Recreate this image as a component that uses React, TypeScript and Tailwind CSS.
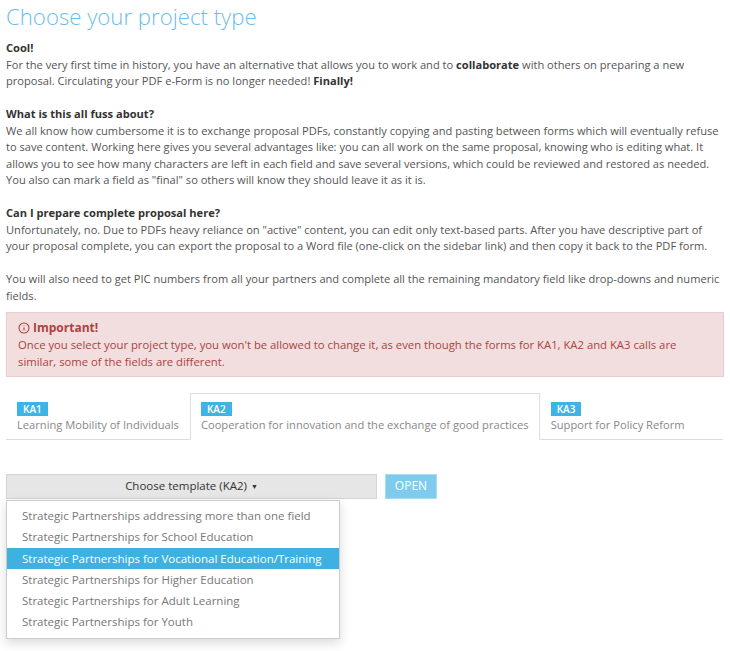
import { Info } from "lucide-react";

const templates = [
  "Strategic Partnerships addressing more than one field",
  "Strategic Partnerships for School Education",
  "Strategic Partnerships for Vocational Education/Training",
  "Strategic Partnerships for Higher Education",
  "Strategic Partnerships for Adult Learning",
  "Strategic Partnerships for Youth",
];

const tabs = [
  { code: "KA1", label: "Learning Mobility of Individuals" },
  { code: "KA2", label: "Cooperation for innovation and the exchange of good practices", active: true },
  { code: "KA3", label: "Support for Policy Reform" },
];

export default function App() {
  return (
    <div
      className="min-h-[651px] bg-white px-[6px] pt-[5px] text-[11.1px] leading-[16.5px] text-[#555]"
      style={{ fontFamily: '"Open Sans", "Liberation Sans", sans-serif' }}
    >
      <h1 className="text-[22.2px] font-light leading-[23px] text-[#6dbde8]">Choose your project type</h1>

      <div className="mt-[12px] w-[718px]">
        <p className="mb-[16.5px]">
          <strong className="text-[#333]">Cool!</strong>
          <br />
          For the very first time in history, you have an alternative that allows you to work and to{" "}
          <strong className="text-[#333]">collaborate</strong> with others on preparing a new proposal. Circulating your
          PDF e-Form is no longer needed! <strong className="text-[#333]">Finally!</strong>
        </p>
        <p className="mb-[16.5px]">
          <strong className="text-[#333]">What is this all fuss about?</strong>
          <br />
          We all know how cumbersome it is to exchange proposal PDFs, constantly copying and pasting between forms which
          will eventually refuse to save content. Working here gives you several advantages like: you can all work on the
          same proposal, knowing who is editing what. It allows you to see how many characters are left in each field and
          save several versions, which could be reviewed and restored as needed. You also can mark a field as "final" so
          others will know they should leave it as it is.
        </p>
        <p className="mb-[16.5px]">
          <strong className="text-[#333]">Can I prepare complete proposal here?</strong>
          <br />
          Unfortunately, no. Due to PDFs heavy reliance on "active" content, you can edit only text-based parts. After you
          have descriptive part of your proposal complete, you can export the proposal to a Word file (one-click on the
          sidebar link) and then copy it back to the PDF form.
        </p>
        <p>
          You will also need to get PIC numbers from all your partners and complete all the remaining mandatory field like
          drop-downs and numeric fields.
        </p>
      </div>

      <div className="mt-[8px] w-[718px] border border-[#ebccd1] bg-[#f2dede] px-[11px] pb-[6px] pt-[6px] text-[#a94442]">
        <div className="flex items-center gap-[3px] text-[12px] font-bold leading-[18px]">
          <Info size={12} strokeWidth={2.2} />
          <span>Important!</span>
        </div>
        <p className="text-[11.3px]">
          Once you select your project type, you won't be allowed to change it, as even though the forms for KA1, KA2 and
          KA3 calls are similar, some of the fields are different.
        </p>
      </div>

      <div className="mt-[16px] flex w-[717px] border-b border-[#ddd]">
        {tabs.map((t) => (
          <div
            key={t.code}
            className={`-mb-px whitespace-nowrap px-[10px] pb-[6px] pt-[8px] text-[#888] ${
              t.active ? "border border-[#ddd] border-b-white bg-white" : "border border-transparent"
            }`}
          >
            <span className="block w-fit bg-[#3db4e5] px-[6px] text-[10px] font-semibold leading-[14px] text-white">
              {t.code}
            </span>
            <div className="text-[11.15px] leading-[17px]">{t.label}</div>
          </div>
        ))}
      </div>

      <div className="mt-[34px] flex gap-[8px]">
        <div className="relative">
          <button className="flex h-[25px] w-[371px] items-center justify-center gap-[4px] border border-[#d4d4d4] bg-[#e6e6e6] text-[11.5px] text-[#333]">
            Choose template (KA2)
            <span className="text-[7px] leading-none">▼</span>
          </button>
          <ul className="absolute left-0 top-[26px] w-[334px] border border-[#ccc] bg-white pb-[5px] pt-[4px] shadow-[0_4px_10px_rgba(0,0,0,0.15)]">
            {templates.map((t, i) => (
              <li
                key={t}
                className={`whitespace-nowrap px-[15px] py-[2px] text-[11.5px] leading-[17.3px] ${
                  i === 2 ? "bg-[#3fb1e0] text-white" : "text-[#777]"
                }`}
              >
                {t}
              </li>
            ))}
          </ul>
        </div>
        <button className="h-[25px] w-[52px] border border-[#a9dcf1] bg-[#7ecbed] text-[12px] text-white">OPEN</button>
      </div>
    </div>
  );
}
